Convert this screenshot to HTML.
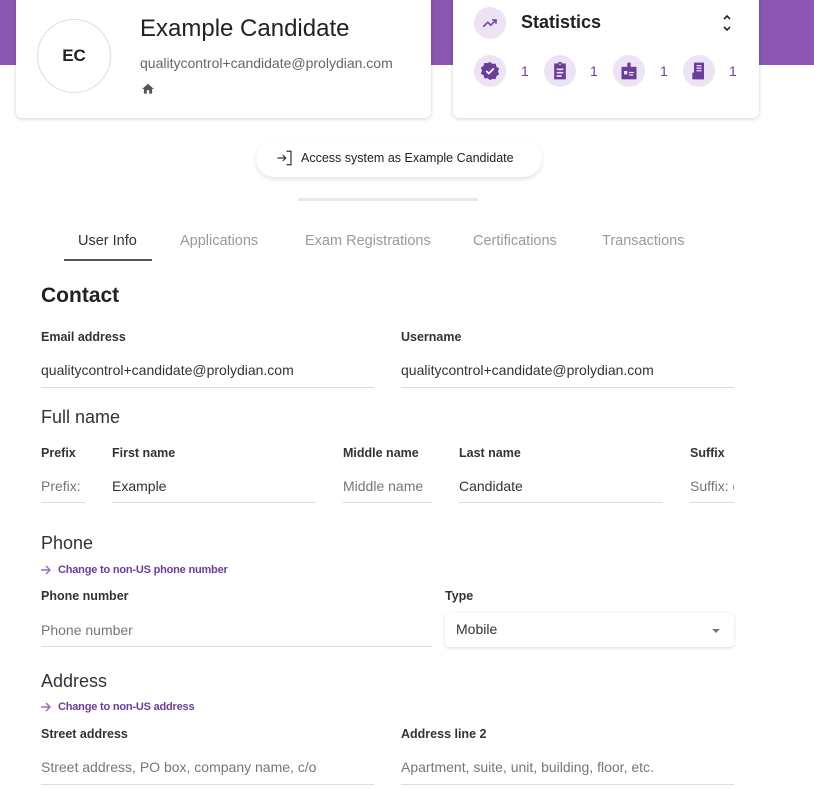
<!DOCTYPE html><html><head><style>
body{margin:0;width:814px;height:790px;overflow:hidden;background:#fff;font-family:"Liberation Sans",sans-serif;color:#222;position:relative}
.ab{position:absolute}
.banner{left:0;top:0;width:814px;height:65px;background:#8b57b3}
.card{background:#fff;border-radius:6px;box-shadow:0 1px 4px rgba(0,0,0,.18)}
.lab{font-size:12.5px;font-weight:bold;color:#333}
.val{font-size:14px;color:#333}
.ph{font-size:14px;color:#777}
.line{height:1px;background:#ddd}
.h2{font-size:18px;color:#333}
.link{font-size:11px;font-weight:bold;color:#6a3d9a;letter-spacing:-0.2px}
.ic{width:32px;height:32px;border-radius:50%;background:#ece3f4}
.num{font-size:14px;color:#6a3d9a}
.tab{font-size:14.5px;color:#999;top:233px}
</style></head><body>
<div class="ab banner"></div>
<div class="ab card" style="left:16px;top:-10px;width:415px;height:128px"></div>
<div class="ab" style="left:37px;top:19px;width:72px;height:72px;border:1px solid #ddd;border-radius:50%;text-align:center;line-height:72px;font-size:17px;font-weight:bold">EC</div>
<div class="ab" style="left:140px;top:15px;font-size:24px;color:#222">Example Candidate</div>
<div class="ab" style="left:140px;top:55px;font-size:14px;color:#666">qualitycontrol+candidate@prolydian.com</div>
<svg class="ab" style="left:141px;top:82px" width="14" height="14" viewBox="0 0 24 24"><path d="M10 20v-6h4v6h5v-8h3L12 3 2 12h3v8z" fill="#555"/></svg>
<div class="ab card" style="left:453px;top:-10px;width:306px;height:128px"></div>
<div class="ab ic" style="left:474px;top:7px"></div>
<svg class="ab" style="left:481px;top:14px" width="18" height="18" viewBox="0 0 24 24"><path d="M3 17l6-6 4 4 7-7M15 8h5v5" stroke="#7a4bab" stroke-width="2.2" fill="none"/></svg>
<div class="ab" style="left:521px;top:12px;font-size:18px;font-weight:bold;color:#222">Statistics</div>
<svg class="ab" style="left:721px;top:13px" width="12" height="20" viewBox="0 0 12 20"><path d="M3 6l3-3 3 3M3 14l3 3 3-3" stroke="#222" stroke-width="1.6" fill="none"/></svg>
<div class="ab ic" style="left:474px;top:55px"></div><div class="ab num" style="left:521px;top:63px">1</div>
<div class="ab ic" style="left:544px;top:55px"></div><div class="ab num" style="left:590px;top:63px">1</div>
<div class="ab ic" style="left:613px;top:55px"></div><div class="ab num" style="left:660px;top:63px">1</div>
<div class="ab ic" style="left:683px;top:55px"></div><div class="ab num" style="left:729px;top:63px">1</div>
<svg class="ab" style="left:480px;top:61px" width="20" height="20" viewBox="0 0 24 24"><path d="M12 1l3 2.5 3.8-.3.9 3.7 3.3 2-1.5 3.6 1.5 3.6-3.3 2-.9 3.7-3.8-.3L12 23l-3-2.5-3.8.3-.9-3.7-3.3-2L2.5 11.5 1 7.9l3.3-2 .9-3.7 3.8.3z" fill="#6a3d9a"/><path d="M7.5 12l3 3 6-6" stroke="#fff" stroke-width="2.2" fill="none"/></svg>
<svg class="ab" style="left:550px;top:61px" width="20" height="20" viewBox="0 0 24 24"><path d="M19 3h-4.2C14.4 1.8 13.3 1 12 1s-2.4.8-2.8 2H5v19h14zM12 3a1 1 0 110 2 1 1 0 010-2zM8 9h8v2H8zm0 4h8v2H8zm0 4h6v2H8z" fill="#6a3d9a"/></svg>
<svg class="ab" style="left:619px;top:61px" width="20" height="20" viewBox="0 0 24 24"><path d="M3 7h18v15H3z" fill="#6a3d9a"/><rect x="10" y="2" width="4" height="7" fill="#6a3d9a"/><path d="M6 12h4v4H6zM12 13h6v1.5h-6zM12 16h5v1.5h-5z" fill="#ece3f4"/></svg>
<svg class="ab" style="left:689px;top:61px" width="20" height="20" viewBox="0 0 24 24"><path d="M6 2h12v20H6zM4 14h4v8H4z" fill="#6a3d9a"/><path d="M9 5h6v1.5H9zM9 8h6v1.5H9zM9 11h6v1.5H9z" fill="#ece3f4"/></svg>
<div class="ab card" style="left:256px;top:140px;width:286px;height:37px;border-radius:19px;box-shadow:0 2px 5px rgba(0,0,0,.12)"></div>
<svg class="ab" style="left:276px;top:149px" width="18" height="18" viewBox="0 0 24 24"><path d="M2 12h11M9 8l4 4-4 4M14 3h6v18h-6" stroke="#333" stroke-width="1.6" fill="none"/></svg>
<div class="ab" style="left:301px;top:151px;font-size:12.5px;color:#222">Access system as Example Candidate</div>
<div class="ab" style="left:298px;top:198px;width:180px;height:3px;background:#e6e9ec"></div>
<div class="ab tab" style="left:78px;color:#333">User Info</div>
<div class="ab tab" style="left:180px">Applications</div>
<div class="ab tab" style="left:305px">Exam Registrations</div>
<div class="ab tab" style="left:473px">Certifications</div>
<div class="ab tab" style="left:602px">Transactions</div>
<div class="ab" style="left:64px;top:259px;width:88px;height:2px;background:#555"></div>
<div class="ab" style="left:41px;top:284px;font-size:21px;font-weight:bold;color:#222">Contact</div>
<div class="ab lab" style="left:41px;top:330px">Email address</div>
<div class="ab lab" style="left:401px;top:330px">Username</div>
<div class="ab val" style="left:41px;top:362px">qualitycontrol+candidate@prolydian.com</div>
<div class="ab val" style="left:401px;top:362px">qualitycontrol+candidate@prolydian.com</div>
<div class="ab line" style="left:41px;top:387px;width:333px"></div>
<div class="ab line" style="left:401px;top:387px;width:333px"></div>
<div class="ab h2" style="left:41px;top:407px">Full name</div>
<div class="ab lab" style="left:41px;top:446px">Prefix</div>
<div class="ab lab" style="left:112px;top:446px">First name</div>
<div class="ab lab" style="left:343px;top:446px">Middle name</div>
<div class="ab lab" style="left:459px;top:446px">Last name</div>
<div class="ab lab" style="left:690px;top:446px">Suffix</div>
<div class="ab ph" style="left:41px;top:478px">Prefix:</div>
<div class="ab val" style="left:112px;top:478px">Example</div>
<div class="ab ph" style="left:343px;top:478px">Middle name</div>
<div class="ab val" style="left:459px;top:478px">Candidate</div>
<div class="ab ph" style="left:690px;top:478px;width:44px;overflow:hidden;white-space:nowrap">Suffix: e</div>
<div class="ab line" style="left:41px;top:502px;width:44px"></div>
<div class="ab line" style="left:112px;top:502px;width:204px"></div>
<div class="ab line" style="left:343px;top:502px;width:89px"></div>
<div class="ab line" style="left:459px;top:502px;width:204px"></div>
<div class="ab line" style="left:690px;top:502px;width:44px"></div>
<div class="ab h2" style="left:41px;top:533px">Phone</div>
<svg class="ab" style="left:41px;top:565px" width="11" height="10" viewBox="0 0 11 10"><path d="M0 5h9M5 1l4 4-4 4" stroke="#9b6fc4" stroke-width="1.5" fill="none"/></svg>
<div class="ab link" style="left:58px;top:564px">Change to non-US phone number</div>
<div class="ab lab" style="left:41px;top:589px">Phone number</div>
<div class="ab lab" style="left:445px;top:589px">Type</div>
<div class="ab ph" style="left:41px;top:622px">Phone number</div>
<div class="ab line" style="left:41px;top:646px;width:391px"></div>
<div class="ab card" style="left:445px;top:613px;width:289px;height:34px;border-radius:4px;box-shadow:0 1px 3px rgba(0,0,0,.15)"></div>
<div class="ab val" style="left:456px;top:621px">Mobile</div>
<div class="ab" style="left:712px;top:629px;width:0;height:0;border-left:4px solid transparent;border-right:4px solid transparent;border-top:4px solid #777"></div>
<div class="ab h2" style="left:41px;top:671px">Address</div>
<svg class="ab" style="left:41px;top:702px" width="11" height="10" viewBox="0 0 11 10"><path d="M0 5h9M5 1l4 4-4 4" stroke="#9b6fc4" stroke-width="1.5" fill="none"/></svg>
<div class="ab link" style="left:58px;top:701px">Change to non-US address</div>
<div class="ab lab" style="left:41px;top:727px">Street address</div>
<div class="ab lab" style="left:401px;top:727px">Address line 2</div>
<div class="ab ph" style="left:41px;top:759px">Street address, PO box, company name, c/o</div>
<div class="ab ph" style="left:401px;top:759px">Apartment, suite, unit, building, floor, etc.</div>
<div class="ab line" style="left:41px;top:784px;width:333px"></div>
<div class="ab line" style="left:401px;top:784px;width:333px"></div>
</body></html>
